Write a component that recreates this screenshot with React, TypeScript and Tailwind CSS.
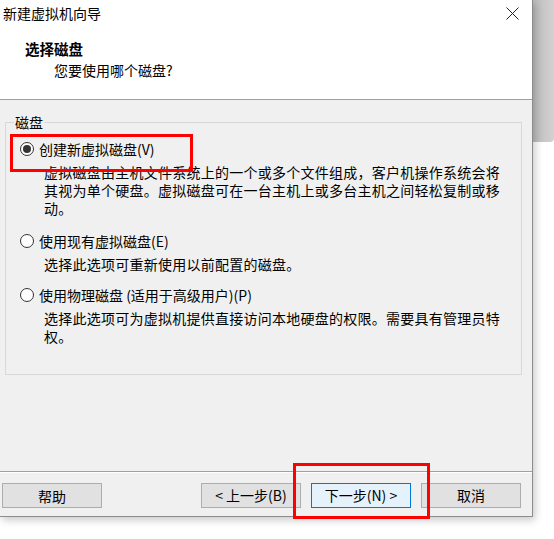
const font = "font-['Noto_Sans_CJK_SC','Noto_Sans',sans-serif]"

function Radio({ checked }: { checked?: boolean }) {
  return (
    <span className="w-[14px] h-[14px] rounded-full border border-[#333] bg-white flex items-center justify-center shrink-0">
      {checked && <span className="w-[8px] h-[8px] rounded-full bg-[#333]" />}
    </span>
  )
}

function Button({ label, primary }: { label: string; primary?: boolean }) {
  return (
    <button
      className={`w-[100px] h-[25px] text-[14px] leading-none text-black border ${
        primary ? "bg-[#e5f1fb] border-[#0078d7]" : "bg-[#e1e1e1] border-[#adadad]"
      }`}
    >
      {label}
    </button>
  )
}

interface Option {
  label: string
  lines: string[]
  checked?: boolean
}

const options: Option[] = [
  {
    label: "创建新虚拟磁盘(V)",
    checked: true,
    lines: [
      "虚拟磁盘由主机文件系统上的一个或多个文件组成，客户机操作系统会将",
      "其视为单个硬盘。虚拟磁盘可在一台主机上或多台主机之间轻松复制或移",
      "动。",
    ],
  },
  {
    label: "使用现有虚拟磁盘(E)",
    lines: ["选择此选项可重新使用以前配置的磁盘。"],
  },
  {
    label: "使用物理磁盘 (适用于高级用户)(P)",
    lines: ["选择此选项可为虚拟机提供直接访问本地硬盘的权限。需要具有管理员特", "权。"],
  },
]

export default function App() {
  return (
    <div className={`relative w-[554px] h-[539px] bg-white overflow-hidden text-black ${font}`}>
      {/* window behind the dialog */}
      <div className="absolute right-0 top-0 w-[21px] h-[142px] rounded-br-[4px] bg-gradient-to-r from-[#bcbcbc] to-[#d2d2d2]" />

      <div className="relative w-[533px] h-[517px] flex flex-col border-r border-b border-[#8c8c8c] shadow-[2px_3px_8px_rgba(0,0,0,0.22)]">
        {/* header */}
        <div className="h-[100px] bg-white border-b border-[#a0a0a0] flex flex-col">
          <div className="h-[26px] flex items-center justify-between pl-[3px] pr-[13px]">
            <span className="text-[14px] leading-[20px]">新建虚拟机向导</span>
            <svg width="13" height="13" viewBox="0 0 13 13" className="text-[#222]">
              <path d="M0.5 0.5 L12.5 12.5 M12.5 0.5 L0.5 12.5" stroke="currentColor" strokeWidth="1" />
            </svg>
          </div>
          <div className="pl-[25px] pt-[13px] text-[14.5px] font-bold leading-[20px]">选择磁盘</div>
          <div className="pl-[54px] mt-[1px] text-[14px] leading-[20px]">您要使用哪个磁盘?</div>
        </div>

        {/* body */}
        <div className="flex-1 bg-[#f0f0f0] flex flex-col">
          <fieldset className="mt-[13px] ml-[5px] w-[517px] h-[262px] border border-[#d8d8d8]">
            <legend className="ml-[8px] px-[1px] text-[14px] leading-[18px]">磁盘</legend>
            <div className="flex flex-col pt-[8px]">
              {options.map((o, i) => (
                <div key={o.label} className={i === 0 ? "" : i === 1 ? "mt-[14px]" : "mt-[12px]"}>
                  <div className="flex items-center h-[20px] pl-[14px] gap-[5px]">
                    <Radio checked={o.checked} />
                    <span className="text-[14px] leading-[20px]">{o.label}</span>
                  </div>
                  <div className="pl-[38px] mt-[4px] text-[14px] leading-[18px] tracking-[0.25px]">
                    {o.lines.map((l) => (
                      <div key={l}>{l}</div>
                    ))}
                  </div>
                </div>
              ))}
            </div>
          </fieldset>

          <div className="mt-auto border-t border-[#a0a0a0] h-[2px] bg-white" />
          <div className="mt-[10px] mb-[8px] flex items-center">
            <div className="ml-[2px]">
              <Button label="帮助" />
            </div>
            <div className="ml-auto mr-[11px] flex gap-[10px]">
              <Button label="< 上一步(B)" />
              <Button label="下一步(N) >" primary />
              <Button label="取消" />
            </div>
          </div>
        </div>
      </div>

      {/* red highlight marks */}
      <div className="absolute left-[10px] top-[134px] w-[183px] h-[38px] border-[3px] border-[#ff0000]" />
      <div className="absolute left-[293px] top-[463px] w-[137px] h-[56px] border-[3px] border-[#ff0000]" />
    </div>
  )
}
